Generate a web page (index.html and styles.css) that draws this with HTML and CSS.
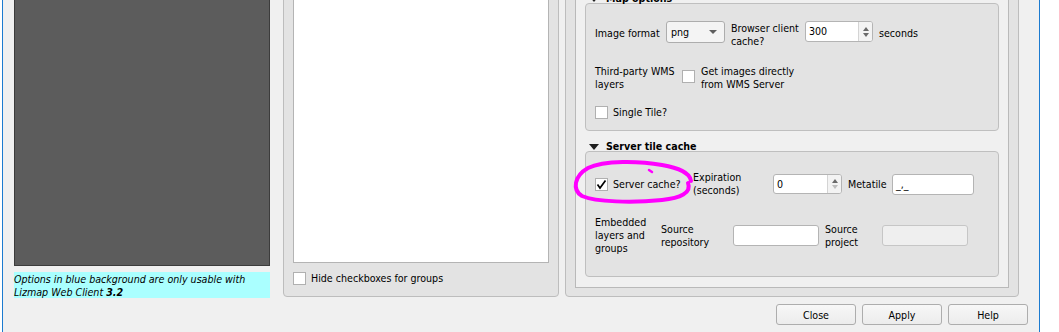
FILE: index.html
```html
<!DOCTYPE html>
<html lang="en">
<head>
    <meta charset="UTF-8">
    <title>Lizmap - Map options</title>
    <link rel="stylesheet" href="styles.css">
</head>
<body>

    <div class="window">
        <div class="main">
            <div class="col-left">
                <div class="preview"></div>
                <p class="note">Options in blue background are only usable with<br>Lizmap Web Client <b>3.2</b></p>
            </div>

            <div class="group group-layers">
                <div class="tree"></div>
                <label class="check-row">
                    <span class="check"></span>
                    <span>Hide checkboxes for groups</span>
                </label>
            </div>

            <div class="group group-options">
                <div class="scroll">
                    <div class="section">
                        <div class="section-title"><span class="arrow"></span>Map options</div>
                        <div class="box map-options">
                            <div class="row row-top">
                                <span class="lbl w-format">Image format</span>
                                <div class="combo"><span>png</span><span class="combo-arrow"></span></div>
                                <span class="lbl lbl-2 w-cache">Browser client<br>cache?</span>
                                <div class="spin w-spin300">
                                    <span class="val">300</span>
                                    <span class="spin-btns"><i class="up"></i><i class="down"></i></span>
                                </div>
                                <span class="lbl">seconds</span>
                            </div>
                            <div class="row row-wms">
                                <span class="lbl-2 w-wms">Third-party WMS<br>layers</span>
                                <span class="check"></span>
                                <span class="lbl-2">Get images directly<br>from WMS Server</span>
                            </div>
                            <label class="row row-single">
                                <span class="check"></span>
                                <span>Single Tile?</span>
                            </label>
                        </div>
                    </div>

                    <div class="section">
                        <div class="section-title"><span class="arrow"></span>Server tile cache</div>
                        <div class="box server-cache">
                            <div class="row row-center row-cache">
                                <label class="check-label w-servercache">
                                    <span class="check checked">
                                        <svg width="11" height="11" viewBox="0 0 11 11"><polyline points="1.5,5.5 4,9 9.5,1.5" fill="none" stroke="#000" stroke-width="1.7"/></svg>
                                    </span>
                                    <span>Server cache?</span>
                                </label>
                                <span class="lbl-2 w-expire">Expiration<br>(seconds)</span>
                                <div class="spin w-spin0">
                                    <span class="val">0</span>
                                    <span class="spin-btns"><i class="up"></i><i class="down off"></i></span>
                                </div>
                                <span class="w-metatile">Metatile</span>
                                <div class="edit w-meta">_,_</div>
                            </div>
                            <div class="row row-center row-embed">
                                <span class="lbl-3 w-embed">Embedded<br>layers and<br>groups</span>
                                <span class="lbl-2 w-repo">Source<br>repository</span>
                                <div class="edit w-src"></div>
                                <span class="lbl-2 w-proj">Source<br>project</span>
                                <div class="edit w-src disabled"></div>
                            </div>
                        </div>
                    </div>
                </div>
            </div>
        </div>

        <div class="buttons">
            <button type="button">Close</button>
            <button type="button">Apply</button>
            <button type="button">Help</button>
        </div>
    </div>

    <!-- hand drawn highlight over the screenshot -->
    <svg class="annotation" width="1059" height="332" viewBox="0 0 1059 332">
        <path d="M688 183 C692 193, 680 198, 662 200 C632 203, 596 202, 582 196 C572 190, 574 176, 588 168 C604 160, 640 161, 662 165 C678 168, 690 172, 691 181"
              fill="none" stroke="#ff00ff" stroke-width="4" stroke-linecap="round"/>
        <path d="M649 170 L652 172" fill="none" stroke="#ff00ff" stroke-width="2.5" stroke-linecap="round"/>
    </svg>

</body>
</html>
```

FILE: styles.css
```css
* {
    box-sizing: border-box;
}
body {
    margin: 0;
    background: #fff;
    font-family: "DejaVu Sans Condensed", "DejaVu Sans", sans-serif;
    font-stretch: condensed;
    font-size: 10.6px;
    line-height: 13px;
    color: #000;
    position: relative;
    height: 332px;
    overflow: hidden;
}
.window {
    margin-left: 2px;
    width: 1038px;
    height: 332px;
    border-left: 1px solid #1c7bd0;
    border-right: 1px solid #1c7bd0;
    background: #f0f0f0;
    overflow: hidden;
}
.main {
    display: flex;
    height: 327px;
    margin-top: -30px;
    padding-left: 11px;
}
.col-left {
    width: 256px;
    flex-shrink: 0;
}
.preview {
    height: 296px;
    background: #5c5c5c;
    border: 1px solid #3c3c3c;
}
.note {
    margin: 6px 0 0;
    height: 26px;
    padding-top: 1px;
    background: #aaffff;
    font-style: italic;
    white-space: nowrap;
}

.group {
    border: 1px solid #bdbdbd;
    border-radius: 4px;
    background: #e3e3e3;
    flex-shrink: 0;
}
.group-layers {
    width: 276px;
    margin-left: 13px;
    padding: 9px 9px 11px;
    display: flex;
    flex-direction: column;
}
.tree {
    flex: 1;
    background: #fff;
    border: 1px solid #b4b4b4;
}
.check-row {
    margin-top: 9px;
    height: 13px;
    display: flex;
    align-items: center;
    gap: 5px;
}
.check {
    width: 13px;
    height: 13px;
    flex-shrink: 0;
    background: #fff;
    border: 1px solid #b0b0b0;
    display: flex;
    align-items: center;
    justify-content: center;
}

.group-options {
    width: 454px;
    margin-left: 6px;
    padding: 9px 9px 8px;
    display: flex;
    flex-direction: column;
}
.scroll {
    flex: 1;
    background: #f0f0f0;
    border: 1px solid #b9b9b9;
    padding: 11px 9px 10px;
}
.section + .section .section-title {
    margin-top: 9px;
}
.section-title {
    display: flex;
    align-items: center;
    height: 13px;
    margin-bottom: -2px;
    font-weight: bold;
    position: relative;
}
.arrow {
    width: 0;
    height: 0;
    border-left: 5px solid transparent;
    border-right: 5px solid transparent;
    border-top: 6px solid #1e1e1e;
    margin: 1px 7px 0 4px;
}
.box {
    border: 1px solid #bfbfbf;
    border-radius: 4px;
    background: #e3e3e3;
}
.map-options {
    padding: 17px 9px 11px;
}
.server-cache {
    padding: 19px 9px 21px;
}
.row {
    display: flex;
    gap: 6px;
    white-space: nowrap;
}
.row-top {
    height: 26px;
    align-items: flex-start;
}
.row-top .lbl {
    margin-top: 6px;
}
.row-top .lbl-2 {
    margin-top: 1px;
}
.row-wms {
    height: 26px;
    margin-top: 18px;
    align-items: flex-start;
}
.row-wms .check {
    margin-top: 5px;
}
.row-single {
    height: 13px;
    margin-top: 15px;
    align-items: center;
    gap: 5px;
}
.row-center {
    align-items: center;
}
.row-cache {
    height: 26px;
}
.row-embed {
    height: 39px;
    margin-top: 19px;
}
.check-label {
    display: flex;
    align-items: center;
    gap: 5px;
}

.w-format { width: 65px; }
.w-cache { width: 68px; }
.w-wms { width: 81px; }
.w-servercache { width: 92px; }
.w-expire { width: 74px; }
.w-metatile { width: 38px; }
.w-embed { width: 60px; }
.w-repo { width: 66px; }
.w-proj { width: 51px; }

.combo {
    width: 59px;
    height: 22px;
    border: 1px solid #adadad;
    border-radius: 3px;
    background: #f4f4f4;
    display: flex;
    align-items: center;
    justify-content: space-between;
    padding: 0 7px 0 4px;
}
.combo-arrow {
    width: 0;
    height: 0;
    border-left: 4px solid transparent;
    border-right: 4px solid transparent;
    border-top: 4px solid #5e5e5e;
}
.spin {
    height: 21px;
    display: flex;
    border: 1px solid #b4b4b4;
    border-radius: 3px;
    background: #fff;
    overflow: hidden;
}
.w-spin300 { width: 68px; }
.w-spin0 {
    width: 69px;
    height: 20px;
}
.spin .val {
    flex: 1;
    padding-left: 3px;
    line-height: 19px;
}
.spin-btns {
    width: 14px;
    border-left: 1px solid #d4d4d4;
    background: #f3f3f3;
    display: flex;
    flex-direction: column;
    align-items: center;
    justify-content: center;
    gap: 2px;
}
.spin-btns i {
    width: 0;
    height: 0;
    border-left: 3.5px solid transparent;
    border-right: 3.5px solid transparent;
}
.spin-btns .up {
    border-bottom: 4px solid #6a6a6a;
}
.spin-btns .down {
    border-top: 4px solid #6a6a6a;
}
.spin-btns .down.off {
    border-top-color: #bdbdbd;
}
.edit {
    height: 21px;
    border: 1px solid #b4b4b4;
    border-radius: 3px;
    background: #fff;
    padding-left: 3px;
    line-height: 19px;
}
.w-meta { width: 82px; }
.w-src { width: 86px; }
.edit.disabled {
    background: #efefef;
    border-color: #c6c6c6;
}

.buttons {
    display: flex;
    justify-content: flex-end;
    gap: 6px;
    margin-top: 7px;
    padding-right: 11px;
}
button {
    width: 80px;
    height: 21px;
    padding: 1px 0 0;
    font: inherit;
    color: #000;
    border: 1px solid #adadad;
    border-radius: 3px;
    background: linear-gradient(#f7f7f7, #ececec);
}

.annotation {
    position: absolute;
    top: 0;
    left: 0;
    pointer-events: none;
}
```
